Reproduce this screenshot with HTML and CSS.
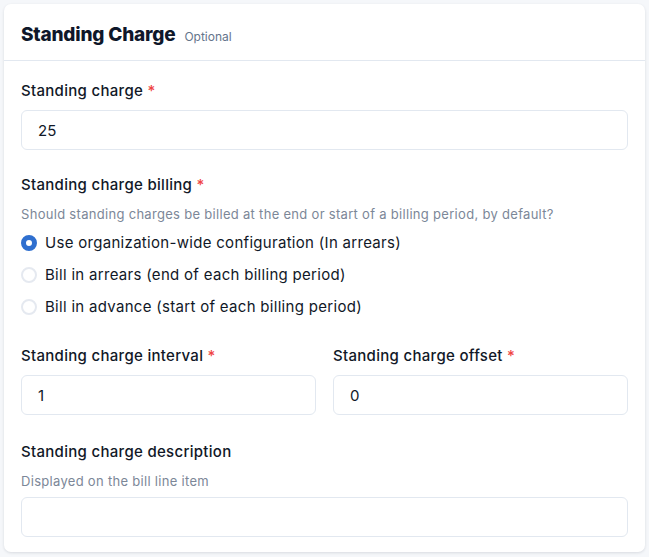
FILE: index.html
```html
<!DOCTYPE html>
<html lang="en">
<head>
    <meta charset="UTF-8">
    <meta name="viewport" content="width=device-width, initial-scale=1.0">
    <title>Standing Charge</title>
    <link rel="stylesheet" href="styles.css">
</head>
<body>
    <!-- Карточка с настройками -->
    <div class="card">
        <div class="card-header">
            <h2 class="card-title">Standing Charge</h2>
            <span class="card-tag">Optional</span>
        </div>

        <div class="card-body">
            <div class="field">
                <label class="label">Standing charge <span class="req">*</span></label>
                <input class="input" type="text" value="25">
            </div>

            <div class="field">
                <label class="label">Standing charge billing <span class="req">*</span></label>
                <p class="hint">Should standing charges be billed at the end or start of a billing period, by default?</p>
                <div class="radio-list">
                    <label class="radio"><input type="radio" name="billing" checked> <span>Use organization-wide configuration (In arrears)</span></label>
                    <label class="radio"><input type="radio" name="billing"> <span>Bill in arrears (end of each billing period)</span></label>
                    <label class="radio"><input type="radio" name="billing"> <span>Bill in advance (start of each billing period)</span></label>
                </div>
            </div>

            <div class="field-row">
                <div class="field">
                    <label class="label">Standing charge interval <span class="req">*</span></label>
                    <input class="input" type="text" value="1">
                </div>
                <div class="field">
                    <label class="label">Standing charge offset <span class="req">*</span></label>
                    <input class="input" type="text" value="0">
                </div>
            </div>

            <div class="field field-desc">
                <label class="label">Standing charge description</label>
                <p class="hint">Displayed on the bill line item</p>
                <input class="input" type="text" value="">
            </div>
        </div>
    </div>
</body>
</html>
```

FILE: styles.css
```css
/* Фон страницы */
body {
    margin: 0;
    padding: 4px;
    background-color: #f5f7fa;
    font-family: Inter, "Noto Sans", sans-serif;
    color: #111827;
    box-sizing: border-box;
}

/* Карточка */
.card {
    background: #fff;
    border-radius: 7px;
    box-shadow: 0 1px 3px rgba(15, 23, 42, 0.12);
    width: 641px;
}

.card-header {
    display: flex;
    align-items: baseline;
    gap: 9px;
    padding: 20px 17px 14px;
    border-bottom: 1px solid #e2e8f0;
}

.card-title {
    margin: 0;
    font-size: 19px;
    font-weight: 800;
    letter-spacing: -0.2px;
    color: #0f172a;
    line-height: 22px;
}

.card-tag {
    font-size: 12px;
    color: #64748b;
}

.card-body {
    padding: 19px 17px 15px;
    display: flex;
    flex-direction: column;
    gap: 24px;
}

.field {
    display: flex;
    flex-direction: column;
    flex: 1;
}

/* Две колонки */
.field-row {
    display: flex;
    gap: 17px;
    margin-top: 3px;
}

.field-desc {
    margin-top: 2px;
}

.label {
    font-size: 15px;
    font-weight: 500;
    line-height: 22px;
    letter-spacing: 0.3px;
    margin-bottom: 8px;
    color: #111827;
}

.req {
    color: #ef4444;
}

.hint {
    margin: 1px 0 7px;
    font-size: 13px;
    letter-spacing: 0.3px;
    color: #7c8798;
    line-height: 18px;
}

.input {
    height: 40px;
    box-sizing: border-box;
    border: 1px solid #e2e8f0;
    border-radius: 6px;
    padding: 0 16px;
    font-family: inherit;
    font-size: 15px;
    color: #111827;
    background: #fff;
    outline: none;
}

/* Радио-кнопки */
.radio-list {
    display: flex;
    flex-direction: column;
    gap: 10px;
    margin-top: 2px;
}

.radio {
    display: flex;
    align-items: center;
    gap: 8px;
    font-size: 15px;
    line-height: 22px;
    letter-spacing: 0.3px;
}

.radio input {
    appearance: none;
    margin: 0;
    width: 16px;
    height: 16px;
    border-radius: 50%;
    border: 2px solid #e5e9f0;
    box-sizing: border-box;
    background: #fff;
}

.radio input:checked {
    border: 5px solid #2f6fcf;
}
```
